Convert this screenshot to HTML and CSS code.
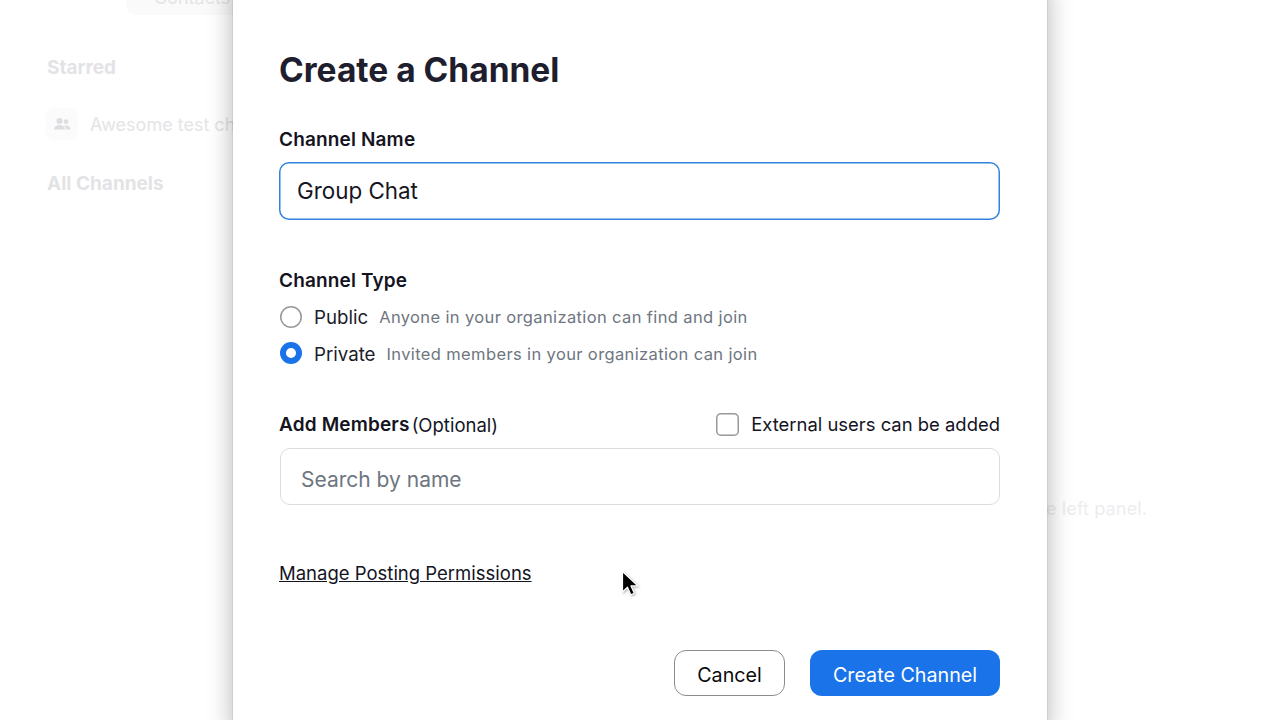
FILE: index.html
```html
<!DOCTYPE html>
<html lang="en">
<head>
<meta charset="utf-8">
<title>Create a Channel</title>
<link rel="stylesheet" href="styles.css">
</head>
<body>
<div class="backdrop">
  <aside class="side">
    <div class="tab">Contacts</div>
    <div class="side-head starred">Starred</div>
    <div class="side-row">
      <span class="side-icon">
        <svg width="18" height="14" viewBox="0 0 18 14"><circle cx="6.500" cy="4" r="3" fill="#dedee2"/><circle cx="13" cy="4.600" r="2.400" fill="#dedee2"/><path d="M1 12.500c0-3 2.400-4.600 5.500-4.600s5.500 1.600 5.500 4.600z" fill="#dedee2"/><path d="M13 12.500h4.500c0-2.600-1.900-4-4.500-4-.7 0-1.300.1-1.800.3 1.200.9 1.800 2.200 1.800 3.700z" fill="#dedee2"/></svg>
      </span>
      <span class="side-name">Awesome test channel</span>
    </div>
    <div class="side-head">All Channels</div>
  </aside>
  <div class="hint">Select a channel from the left panel.</div>
</div>

<section class="modal">
  <h1 class="title">Create a Channel</h1>
  <label class="label name-label">Channel Name</label>
  <div class="input input-active">Group Chat</div>

  <div class="label type-label">Channel Type</div>
  <div class="radio-row first">
    <span class="radio"></span>
    <span class="radio-name">Public</span>
    <span class="radio-desc">Anyone in your organization can find and join</span>
  </div>
  <div class="radio-row second">
    <span class="radio radio-on"></span>
    <span class="radio-name">Private</span>
    <span class="radio-desc">Invited members in your organization can join</span>
  </div>

  <div class="members-head">
    <div class="members-title"><span class="label">Add Members</span><span class="optional">(Optional)</span></div>
    <div class="external"><span class="check"></span><span>External users can be added</span></div>
  </div>
  <div class="input input-search">Search by name</div>

  <a class="manage" href="#">Manage Posting Permissions</a>

  <div class="actions">
    <button class="btn btn-cancel" type="button">Cancel</button>
    <button class="btn btn-create" type="button">Create Channel</button>
  </div>
</section>

<svg class="cursor" width="18" height="28" viewBox="0 0 18 28"><path d="M1.500 1.500v20.500l5-4.800 3.300 7.600 3.500-1.500-3.300-7.400h6.800z" fill="#000" stroke="#fff" stroke-width="1.200" stroke-linejoin="round"/></svg>
</body>
</html>
```
FILE: styles.css
```css
* { box-sizing: border-box; }
html, body { margin: 0; height: 100%; }
body {
  position: relative;
  width: 1280px;
  height: 720px;
  overflow: hidden;
  background: #fff;
  font-family: Inter, "Liberation Sans", sans-serif;
  color: #14141f;
}
.backdrop { position: absolute; inset: 0; }
.side { width: 233px; padding-left: 47px; overflow: hidden; height: 100%; white-space: nowrap; }
.tab {
  position: absolute; left: 126px; top: -16px; width: 120px; height: 31px;
  background: #fafafa; border-radius: 10px; padding: 3px 0 0 28px;
  font-size: 18px; color: #e4e4e7; font-weight: 400;
}
.side-head { font-size: 19px; font-weight: 700; color: #e3e3e6; line-height: 22px; margin-top: 33px; }
.side-head.starred { margin-top: 57px; }
.side-row { display: flex; align-items: center; gap: 12px; margin-top: 29px; height: 32px; margin-left: -1px; }
.side-icon { width: 32px; height: 32px; border-radius: 8px; background: #fbfbfb; display: flex; align-items: center; justify-content: center; flex: none; }
.side-name { font-size: 18px; color: #e4e4e6; }
.hint { position: absolute; right: 133px; top: 498px; font-size: 18.300px; line-height: 20px; color: #ededef; white-space: nowrap; }

.modal {
  position: absolute; left: 233px; top: -20px; width: 814px; height: 760px;
  padding: 0 47px 0 46px;
  background: #fff; border-radius: 14px;
  box-shadow: 0 0 26px rgba(0,0,0,.3);
  outline: 1px solid rgba(0,0,0,.06);
}
.title { margin: 69px 0 0; font-size: 33.500px; line-height: 42px; font-weight: 700; color: #1e1e2e; }
.label { font-size: 19px; font-weight: 600; line-height: 24px; color: #14141f; display: block; letter-spacing: .15px; }
.name-label { margin-top: 37px; }
.input { border-radius: 10px; height: 58px; display: flex; align-items: center; }
.input-active { margin-top: 10px; box-shadow: inset 0 0 0 1.500px #2f83dc; padding: 0 0 2px 18px; color: #16161f; font-size: 22.400px; }
.type-label { margin-top: 49px; }
.radio-row { display: flex; align-items: center; height: 24px; margin-top: 12px; }
.second .radio-name, .second .radio-desc { padding-top: 2px; }
.radio { width: 22px; height: 22px; box-shadow: inset 0 0 0 1.500px #989898; border-radius: 50%; margin: 0 12px 0 1px; flex: none; background: #fff; }
.radio-on { box-shadow: inset 0 0 0 6px #1a73e8; }
.radio-name { font-size: 18.700px; color: #1c1c28; margin-right: 11px; }
.radio-desc { font-size: 16.500px; color: #6e7680; letter-spacing: 0.370px; }
.members-head { display: flex; justify-content: space-between; align-items: center; margin-top: 46px; height: 26px; }
.members-title { display: flex; align-items: center; gap: 2px; padding-top: 1px; }
.optional { font-size: 18.500px; color: #14141f; line-height: 22px; }
.external { display: flex; align-items: center; gap: 12px; font-size: 18.450px; color: #14141f; }
.check { width: 23px; height: 23px; box-shadow: inset 0 0 0 1.500px #989898; border-radius: 5px; }
.input-search { margin-top: 11px; border: 1px solid #dcdcdf; padding: 5px 0 0 20px; color: #6e7680; height: 57px; margin-left: 1px; font-size: 21px; }
.manage { display: block; margin-top: 56px; font-size: 18.500px; line-height: 24px; color: #14141f; text-decoration: underline; }
.actions { display: flex; justify-content: flex-end; gap: 25px; margin-top: 65px; }
.btn { height: 46px; border-radius: 12px; font-family: inherit; font-size: 19.700px; padding: 3px 0 0; }
.btn-cancel { width: 111px; background: #fff; color: #0a0a0a; border: 1px solid #8c8c8c; }
.btn-create { width: 190px; background: #1a73e8; color: #fff; border: none; }
.cursor { position: absolute; left: 621px; top: 570px; filter: drop-shadow(1px 1px 1px rgba(0,0,0,.3)); }
```
